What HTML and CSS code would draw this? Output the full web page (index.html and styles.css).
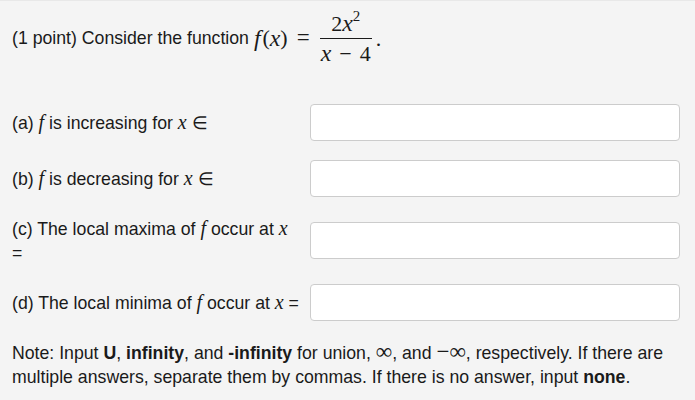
FILE: index.html
```html
<!DOCTYPE html>
<html>
<head>
<meta charset="utf-8">
<link rel="stylesheet" href="styles.css">
</head>
<body>
<div class="problem">
  <div class="header">
    <span>(1 point) Consider the function&nbsp;</span>
    <span class="math"><i class="mi mf">f</i><span class="mo">(</span><i class="mi">x</i><span class="mo">)</span><span class="rel">=</span><span class="frac"><span class="num">2<i class="mi">x</i><sup>2</sup></span><span class="den"><i class="mi">x</i><span class="bin">−</span>4</span></span><span class="period">.</span></span>
  </div>

  <div class="rows">
    <div class="row">
      <div class="label">(a) <i class="mi">f</i> is increasing for <i class="mi">x</i> <span class="mo">∈</span></div>
      <input class="answer" type="text">
    </div>
    <div class="row">
      <div class="label">(b) <i class="mi">f</i> is decreasing for <i class="mi">x</i> <span class="mo">∈</span></div>
      <input class="answer" type="text">
    </div>
    <div class="row">
      <div class="label">(c) The local maxima of <i class="mi">f</i> occur at <i class="mi">x</i><br>=</div>
      <input class="answer" type="text">
    </div>
    <div class="row">
      <div class="label">(d) The local minima of <i class="mi">f</i> occur at <i class="mi">x</i> =</div>
      <input class="answer" type="text">
    </div>
  </div>

  <p class="note">Note: Input <b>U</b>, <b>infinity</b>, and <b>-infinity</b> for union, <span class="inf">∞</span>, and <span class="inf">−∞</span>, respectively. If there are multiple answers, separate them by commas. If there is no answer, input <b>none</b>.</p>
</div>
</body>
</html>
```

FILE: styles.css
```css
html, body {
  margin: 0;
  padding: 0;
}
body {
  background: #f4f4f4;
  border-top: 1px solid #e8e8e8;
  font-family: "Liberation Sans", Arial, sans-serif;
  font-size: 17.7px;
  line-height: 24px;
  color: #1a1a1a;
  width: 695px;
  height: 399px;
  overflow: hidden;
}
.problem {
  padding: 0 15px 0 12px;
}
.header {
  display: flex;
  align-items: center;
  margin-top: 13px;
  height: 48px;
}
.math {
  display: inline-flex;
  align-items: center;
  font-family: "Liberation Serif", "Times New Roman", serif;
  font-size: 22px;
}
.mi {
  font-family: "Liberation Serif", "Times New Roman", serif;
  font-style: italic;
  font-size: 1.08em;
}
.mf {
  margin-right: 2px;
}
.mo {
  font-family: "Liberation Serif", "Times New Roman", serif;
}
.label .mi {
  font-size: 20px;
}
.label .mo {
  font-size: 18px;
}
.rel {
  margin: 0 9px 0 9px;
  font-size: 23px;
}
.frac {
  display: inline-flex;
  flex-direction: column;
  align-items: center;
  padding: 0 1px;
}
.num {
  line-height: 20px;
  padding: 0 0 4px;
  border-bottom: 1px solid #1a1a1a;
  width: 100%;
  text-align: center;
}
.num sup {
  font-size: 15px;
  line-height: 0;
  vertical-align: 10px;
}
.den {
  line-height: 20px;
  padding: 4px 1px 0;
}
.bin {
  margin: 0 8px;
}
.period {
  margin-top: 2px;
  margin-left: 3px;
}
.rows {
  margin-top: 42px;
  display: flex;
  flex-direction: column;
  gap: 19px;
}
.row {
  display: flex;
  align-items: center;
}
.label {
  flex: 1;
  white-space: nowrap;
}
.answer {
  box-sizing: border-box;
  flex: none;
  width: 370px;
  height: 37px;
  margin: 0;
  background: #fff;
  border: 1px solid #cccccc;
  border-radius: 4px;
  font: inherit;
}
.note {
  margin: 19px 0 0;
}
.inf {
  font-family: "Liberation Serif", "Times New Roman", serif;
  font-size: 23px;
  line-height: 1;
}
```
